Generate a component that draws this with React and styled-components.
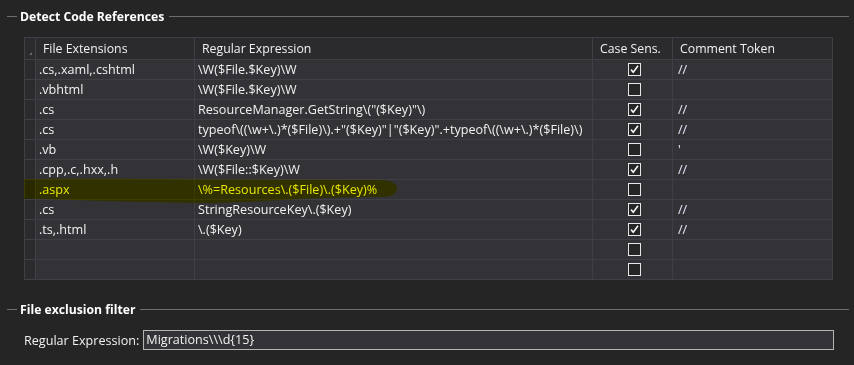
import React from 'react';
import styled, { createGlobalStyle } from 'styled-components';

const GlobalStyle = createGlobalStyle`
  html, body {
    margin: 0;
    padding: 0;
    background: #252526;
  }
  body {
    font-family: 'Open Sans', 'Noto Sans', sans-serif;
    font-size: 12px;
    color: #f1f1f1;
  }
`;

const rows = [
  { ext: '.cs,.xaml,.cshtml', regex: String.raw`\W($File.$Key)\W`, caseSens: true, token: '//' },
  { ext: '.vbhtml', regex: String.raw`\W($File.$Key)\W`, caseSens: false, token: '' },
  { ext: '.cs', regex: String.raw`ResourceManager.GetString\("($Key)"\)`, caseSens: true, token: '//' },
  {
    ext: '.cs',
    regex: String.raw`typeof\((\w+\.)*($File)\).+"($Key)"|"($Key)".+typeof\((\w+\.)*($File)\)`,
    caseSens: true,
    token: '//',
  },
  { ext: '.vb', regex: String.raw`\W($Key)\W`, caseSens: false, token: "'" },
  { ext: '.cpp,.c,.hxx,.h', regex: String.raw`\W($File::$Key)\W`, caseSens: true, token: '//' },
  { ext: '.aspx', regex: String.raw`\%=Resources\.($File)\.($Key)%`, caseSens: false, token: '' },
  { ext: '.cs', regex: String.raw`StringResourceKey\.($Key)`, caseSens: true, token: '//' },
  { ext: '.ts,.html', regex: String.raw`\.($Key)`, caseSens: true, token: '//' },
  { ext: '', regex: '', caseSens: false, token: '' },
  { ext: '', regex: '', caseSens: false, token: '' },
];

const Page = styled.div`
  position: relative;
  padding: 8px 5px 16px 7px;
`;

const GroupHeader = styled.div`
  display: flex;
  align-items: center;
  height: 16px;
  margin-top: ${({ top }) => top || 0}px;
  &::before {
    content: '';
    width: 10px;
    height: 1px;
    background: #6e6e6e;
    margin-right: 3px;
  }
  &::after {
    content: '';
    flex: 1;
    height: 1px;
    background: #6e6e6e;
    margin-left: 5px;
  }
`;

const GroupTitle = styled.span`
  font-weight: 700;
  color: #ffffff;
  font-size: 12.2px;
`;

const GroupBody = styled.div`
  padding-left: 17px;
  padding-right: 16px;
`;

const Grid = styled.table`
  margin-top: 13px;
  width: 808px;
  border-collapse: collapse;
  table-layout: fixed;
  border: 1px solid #3f3f46;
`;

const HeadCell = styled.th`
  height: 21px;
  padding: 0 0 0 7px;
  text-align: left;
  font-weight: 400;
  font-size: 12.3px;
  background: #2b2b2e;
  color: #f1f1f1;
  border-right: 1px solid #3f3f46;
  border-bottom: 1px solid #3f3f46;
  white-space: nowrap;
  overflow: hidden;
`;

const CornerCell = styled.th`
  height: 21px;
  padding: 0;
  background: #2b2b2e;
  border-right: 1px solid #3f3f46;
  border-bottom: 1px solid #3f3f46;
  position: relative;
  &::after {
    content: '';
    position: absolute;
    right: 3px;
    bottom: 4px;
    border-left: 3px solid transparent;
    border-bottom: 3px solid #6a6a6a;
  }
`;

const RowHead = styled.td`
  height: 19px;
  padding: 0;
  background: #2b2b2e;
  border-right: 1px solid #3f3f46;
  border-bottom: 1px solid #3f3f46;
`;

const Cell = styled.td`
  height: 18px;
  padding: 1px 0 0 3px;
  line-height: 16px;
  font-size: 12.6px;
  background: #333337;
  color: #f1f1f1;
  border-right: 1px solid #3f3f46;
  border-bottom: 1px solid #3f3f46;
  white-space: nowrap;
  overflow: hidden;
  text-align: ${({ center }) => (center ? 'center' : 'left')};
  vertical-align: middle;
`;

const TokenText = styled.span`
  padding-left: 2px;
  color: #e8e8ff;
`;

const CheckBox = styled.span`
  display: inline-flex;
  align-items: center;
  justify-content: center;
  width: 11px;
  height: 11px;
  border: 1px solid #e6e6e6;
  background: #252526;
  vertical-align: middle;
  margin-top: -2px;
`;

const Highlight = styled.svg`
  position: absolute;
  left: 0;
  top: 0;
  pointer-events: none;
  mix-blend-mode: multiply;
`;

const FilterRow = styled.div`
  display: flex;
  align-items: center;
  margin-top: 13px;
  margin-right: -1px;
  gap: 4px;
`;

const FilterLabel = styled.label`
  color: #f1f1f1;
  font-size: 12.6px;
  white-space: nowrap;
`;

const FilterInput = styled.div`
  flex: 1;
  height: 18px;
  line-height: 18px;
  font-size: 12.6px;
  border: 1px solid #b4b4b4;
  background: #333337;
  color: #f1f1f1;
  padding-left: 2px;
`;

const Check = ({ checked }) => (
  <CheckBox>
    {checked && (
      <svg width="11" height="11" viewBox="0 0 11 11">
        <path d="M2 5.6 L4.3 8.2 L9 1.8" fill="none" stroke="#f4f4f4" strokeWidth="1.6" />
      </svg>
    )}
  </CheckBox>
);

const App = () => {
  return (
    <>
      <GlobalStyle />
      <Page>
        <GroupHeader>
          <GroupTitle>Detect Code References</GroupTitle>
        </GroupHeader>
        <GroupBody>
          <Grid>
            <colgroup>
              <col style={{ width: 11 }} />
              <col style={{ width: 159 }} />
              <col style={{ width: 398 }} />
              <col style={{ width: 80 }} />
              <col style={{ width: 160 }} />
            </colgroup>
            <thead>
              <tr>
                <CornerCell />
                <HeadCell>File Extensions</HeadCell>
                <HeadCell>Regular Expression</HeadCell>
                <HeadCell>Case Sens.</HeadCell>
                <HeadCell>Comment Token</HeadCell>
              </tr>
            </thead>
            <tbody>
              {rows.map((r, i) => (
                <tr key={i}>
                  <RowHead />
                  <Cell>{r.ext}</Cell>
                  <Cell>{r.regex}</Cell>
                  <Cell center>
                    <Check checked={r.caseSens} />
                  </Cell>
                  <Cell>
                    <TokenText>{r.token}</TokenText>
                  </Cell>
                </tr>
              ))}
            </tbody>
          </Grid>
        </GroupBody>

        <GroupHeader top={21}>
          <GroupTitle>File exclusion filter</GroupTitle>
        </GroupHeader>
        <GroupBody>
          <FilterRow>
            <FilterLabel>Regular Expression:</FilterLabel>
            <FilterInput>{String.raw`Migrations\\\d{15}`}</FilterInput>
          </FilterRow>
        </GroupBody>

        <Highlight width="854" height="365" viewBox="0 0 854 365">
          <path
            d="M24 179 C 120 178 250 180 380 180 Q 398 181 397 189 Q 396 197 380 197 C 300 197 262 203 200 203 C 120 202 60 199 24 199 Z"
            fill="#f4f400"
          />
        </Highlight>
      </Page>
    </>
  );
};

export default App;
